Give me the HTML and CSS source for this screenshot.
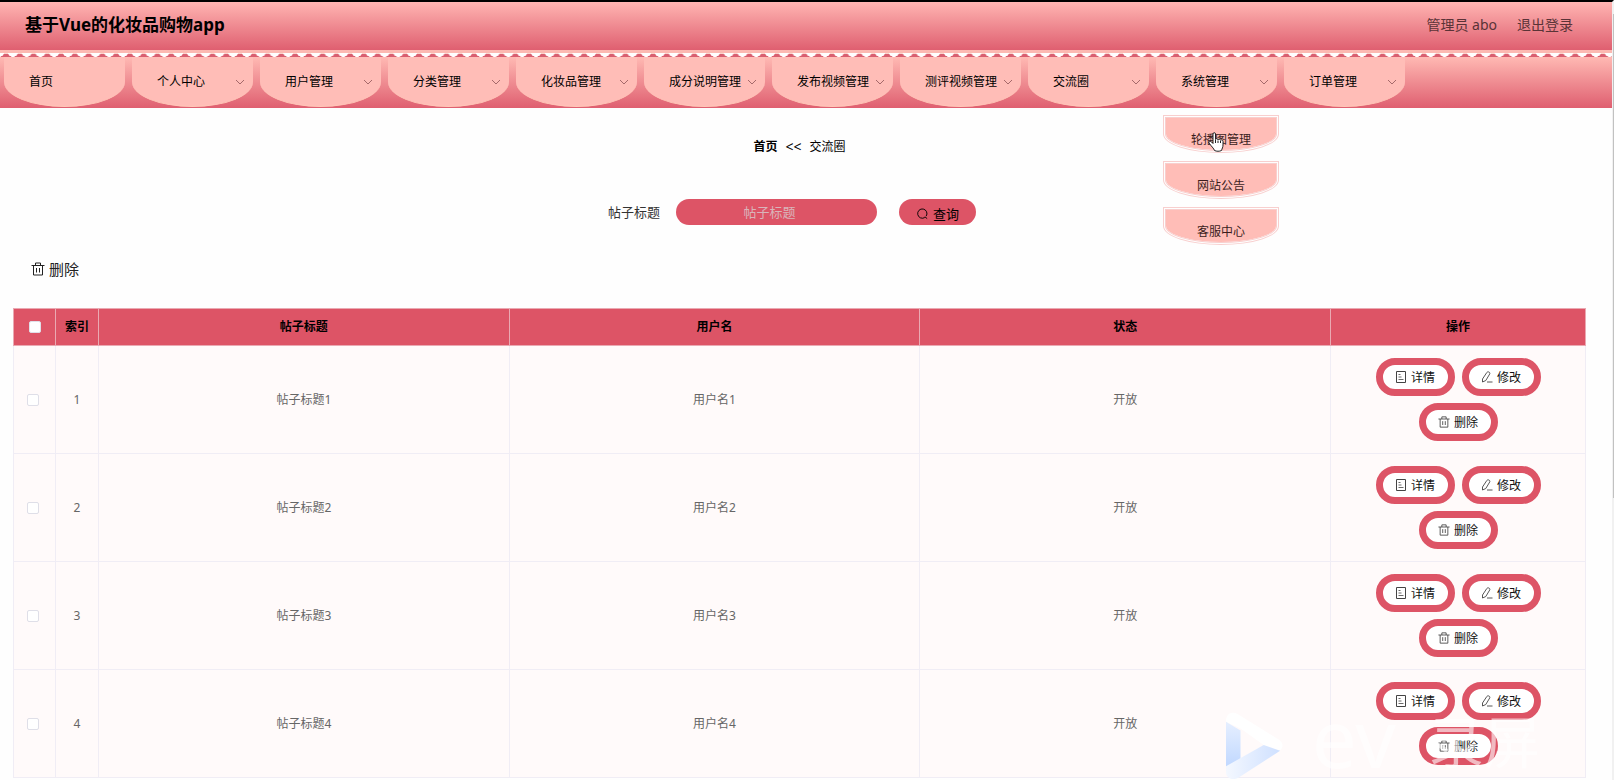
FILE: index.html
```html
<!DOCTYPE html>
<html lang="zh-CN">
<head>
  <meta charset="UTF-8">
  <meta name="viewport" content="width=device-width, initial-scale=1">
  <title>基于Vue的化妆品购物app</title>
  <link rel="stylesheet" href="styles.css">
</head>
<body>
  <svg width="0" height="0" class="sprite" aria-hidden="true">
    <symbol id="icon-arrow" viewBox="0 0 10 10">
      <path d="M1 3l4 4 4-4"/>
    </symbol>
    <symbol id="icon-search" viewBox="0 0 14 14">
      <path d="M9.500 11.300A5 5 0 1 1 11 9.800M9.500 10.500l2.500 2"/>
    </symbol>
    <symbol id="icon-delete" viewBox="0 0 14 14">
      <path d="M.5 3.500h13M2.500 3.500v9.500h9V3.500M4.500 3.500V1h5v2.500M5.500 6v4.500M8.500 6v4.500"/>
    </symbol>
    <symbol id="icon-detail" viewBox="0 0 12 12">
      <path d="M1.500.5h9v11h-9z"/>
      <path stroke-width=".8" d="M3.500 3.500h2M3.500 6h3M3.500 8.500h5"/>
    </symbol>
    <symbol id="icon-edit" viewBox="0 0 12 12">
      <path stroke-width=".9" d="M1.500 8l4.300-6.500c1-1.500 3.800-.2 2.900 1.500L4.800 9.500l-3.300 1.500zM6 11h5.500"/>
    </symbol>
  </svg>

  <header class="top">
    <h1>基于Vue的化妆品购物app</h1>
    <div class="user">
      <span>管理员 abo</span>
      <a href="#">退出登录</a>
    </div>
  </header>
  <div class="lace"></div>

  <nav class="menu">
    <a class="item" href="#">首页</a>
    <a class="item" href="#">个人中心<svg><use href="#icon-arrow"/></svg></a>
    <a class="item" href="#">用户管理<svg><use href="#icon-arrow"/></svg></a>
    <a class="item" href="#">分类管理<svg><use href="#icon-arrow"/></svg></a>
    <a class="item" href="#">化妆品管理<svg><use href="#icon-arrow"/></svg></a>
    <a class="item" href="#">成分说明管理<svg><use href="#icon-arrow"/></svg></a>
    <a class="item" href="#">发布视频管理<svg><use href="#icon-arrow"/></svg></a>
    <a class="item" href="#">测评视频管理<svg><use href="#icon-arrow"/></svg></a>
    <a class="item" href="#">交流圈<svg><use href="#icon-arrow"/></svg></a>
    <div class="group">
      <a class="item" href="#">系统管理<svg><use href="#icon-arrow"/></svg></a>
      <div class="submenu">
        <a href="#">轮播图管理</a>
        <a href="#">网站公告</a>
        <a href="#">客服中心</a>
        <svg class="cursor" viewBox="0 0 16 20">
          <path d="M5 2c0-1.800 2.500-1.800 2.500 0v5.500c.2-1.200 2.400-1.100 2.500.3.400-1 2.400-.8 2.500.5.500-.8 2.500-.6 2.500 1V13c0 2.500-1 3.500-1.500 5.500-2 1-5 1-7 0C6 16.500 3 14 1 11c-.8-1.500 1-2.500 2.200-1.300L5 11.500z"/>
          <path d="M7.500 8v3M10 8.500V11M12.500 9v2"/>
        </svg>
      </div>
    </div>
    <a class="item" href="#">订单管理<svg><use href="#icon-arrow"/></svg></a>
  </nav>

  <main>
    <div class="crumbs"><a href="#">首页</a><span class="sep">&lt;&lt;</span><span>交流圈</span></div>

    <form class="search">
      <label for="title">帖子标题</label>
      <input type="text" id="title" placeholder="帖子标题">
      <button type="button"><svg><use href="#icon-search"/></svg>查询</button>
    </form>

    <button type="button" class="batch"><svg><use href="#icon-delete"/></svg>删除</button>

    <table>
      <colgroup>
        <col class="col-check">
        <col class="col-index">
        <col>
        <col>
        <col>
        <col class="col-ops">
      </colgroup>
      <thead>
        <tr>
          <th><input type="checkbox" aria-label="全选"></th>
          <th>索引</th>
          <th>帖子标题</th>
          <th>用户名</th>
          <th>状态</th>
          <th>操作</th>
        </tr>
      </thead>
      <tbody id="rows"></tbody>
    </table>
  </main>

  <div class="watermark" aria-hidden="true">
    <svg viewBox="0 0 60 72">
      <defs>
        <linearGradient id="wm-side" x1="0" y1="0" x2="0" y2="1">
          <stop offset="0" stop-color="#e6efff"/>
          <stop offset="1" stop-color="#bcd5ff"/>
        </linearGradient>
        <linearGradient id="wm-base" x1="0" y1="0" x2="1" y2="0">
          <stop offset="0" stop-color="#f4f8ff"/>
          <stop offset="1" stop-color="#cfe0ff"/>
        </linearGradient>
      </defs>
      <path fill="#fff" d="M0 12C0 3 6 1 12 4l42 26c6 4 6 9 0 13l-15-7-24-17z"/>
      <path fill="url(#wm-side)" d="M0 12l15 9v33L0 64z"/>
      <path fill="url(#wm-base)" d="M0 58l39-22 17 6-42 27C6 74 0 70 0 64z"/>
    </svg>
    <span class="wm-ev">ev</span><span class="wm-name">录屏</span>
  </div>

  <script>
    const rows = document.getElementById('rows');
    const ops = [['detail', '详情'], ['edit', '修改'], ['delete', '删除']];

    for (let i = 1; i <= 4; i++) {
      const buttons = ops.map(([icon, text]) =>
        `<button type="button"><svg><use href="#icon-${icon}"/></svg>${text}</button>`).join('');
      rows.innerHTML += `<tr>
        <td><input type="checkbox" aria-label="选择${i}"></td>
        <td>${i}</td>
        <td>帖子标题${i}</td>
        <td>用户名${i}</td>
        <td>开放</td>
        <td><div class="ops">${buttons}</div></td>
      </tr>`;
    }
  </script>
</body>
</html>
```
FILE: styles.css
```css
* {
  box-sizing: border-box;
}

body {
  min-height: 100vh;
  margin: 0;
  border-top: 2px solid #000;
  border-right: 2px solid #f1f1f1;
  font-family: "Noto Sans", "Noto Sans CJK SC", sans-serif;
  font-size: 12px;
  line-height: 20px;
  color: #000;
  background: #fefefe;
}

/* scrollbar thumb */
body::after {
  content: "";
  position: fixed;
  top: 14px;
  right: 0;
  width: 1px;
  height: 62%;
  background: #c1c1c1;
}

a {
  color: inherit;
  text-decoration: none;
}

button {
  font-family: inherit;
  cursor: pointer;
}

svg {
  fill: none;
  stroke: currentColor;
  flex-shrink: 0;
}

.sprite {
  position: absolute;
}

.top {
  display: flex;
  align-items: center;
  justify-content: space-between;
  height: 48px;
  padding: 0 39px 2px 25px;
  background: linear-gradient(#ffb5b2, #df5f70);
}

.top h1 {
  margin: 0;
  font-size: 17px;
}

.user {
  display: flex;
  gap: 20px;
  font-size: 14px;
  color: #5a3337;
}

.lace {
  height: 7px;
  background:
    radial-gradient(ellipse 5px 4px at 50% 0, #fff 90%, transparent) 6px 3px / calc(100% / 117) 4px repeat-x,
    linear-gradient(#fcb9b2 3px, #fbd3cd 3px, #fbd3cd 4px, #d95f70 4px);
}

.menu {
  display: flex;
  gap: 7px;
  height: 51px;
  padding: 0 4px;
  background: linear-gradient(#ffb9b3, #df5f70);
}

.item {
  display: flex;
  align-items: center;
  justify-content: space-between;
  width: 121px;
  height: 50px;
  padding: 0 8px 0 25px;
  white-space: nowrap;
  border-bottom: 1px solid #ffc8b8;
  border-radius: 0 0 50% 50%;
  background: #ffbdb7;
}

.item svg {
  width: 10px;
  height: 10px;
  color: #a5696a;
}

.group {
  position: relative;
}

.submenu {
  position: absolute;
  top: 58px;
  left: 7px;
  display: flex;
  flex-direction: column;
  gap: 8px;
}

.submenu a {
  width: 116px;
  height: 38px;
  padding-top: 12px;
  text-align: center;
  color: #3b1d1d;
  border: 3px double #f8cfce;
  border-radius: 0 0 50% 50%;
  background: #ffbdb7;
  background-clip: padding-box;
}

.cursor {
  position: absolute;
  top: 17px;
  left: 45px;
  width: 16px;
  height: 20px;
  fill: #fff;
  stroke: #222;
}

.crumbs {
  display: flex;
  justify-content: center;
  gap: 8px;
  padding: 29px 13px 0 0;
}

.crumbs a {
  font-weight: bold;
}

.crumbs .sep {
  font-size: 14px;
}

.search {
  display: flex;
  align-items: center;
  justify-content: center;
  padding: 42px 28px 0 0;
  font-size: 13px;
}

.search label {
  margin-right: 16px;
  color: #333;
}

.search input {
  width: 201px;
  height: 26px;
  margin-right: 22px;
  padding: 0 14px 0 0;
  border: 0;
  border-radius: 13px;
  font: inherit;
  text-align: center;
  background: #dd5466;
}

.search input::placeholder {
  color: #d9b4ba;
}

.search button {
  display: flex;
  align-items: center;
  justify-content: center;
  gap: 4px;
  width: 77px;
  height: 26px;
  padding: 3px 0 0;
  border: 0;
  border-radius: 13px;
  font-size: 13px;
  background: #dd5466;
}

.search svg {
  width: 13px;
  height: 13px;
}

.batch {
  display: flex;
  align-items: center;
  gap: 4px;
  margin: 32px 0 27px 31px;
  padding: 0;
  border: 0;
  font-size: 15px;
  line-height: 24px;
  color: #222;
  background: none;
}

.batch svg {
  width: 14px;
  height: 14px;
}

table {
  width: calc(100% - 39px);
  margin-left: 13px;
  table-layout: fixed;
  border-collapse: collapse;
}

.col-check {
  width: 42px;
}

.col-index {
  width: 43px;
}

.col-ops {
  width: 255px;
}

th,
td {
  padding: 0;
  text-align: center;
  border: 1px solid #f0edf5;
}

th {
  height: 37px;
  border-color: #eaa9b2;
  background: #dd5466;
}

td {
  height: 108px;
  color: #666;
  background: #fffafa;
}

td:first-child {
  padding-right: 3px;
}

input[type="checkbox"] {
  appearance: none;
  display: block;
  width: 12px;
  height: 12px;
  margin: 0 auto;
  border: 1px solid #dfdfe8;
  border-radius: 2px;
  background: #fff;
}

.ops {
  display: flex;
  flex-wrap: wrap;
  justify-content: center;
  gap: 7px;
  padding: 0 40px;
}

.ops button {
  display: flex;
  align-items: center;
  justify-content: center;
  gap: 4px;
  width: 79px;
  height: 38px;
  padding: 0;
  border: 7px solid #dd5466;
  border-radius: 19px;
  font-size: 12px;
  color: #111;
  background: #fff;
}

.ops svg {
  width: 12px;
  height: 12px;
  color: #444;
}

/* screen recorder mark over the page */
.watermark {
  position: fixed;
  right: 74px;
  bottom: 0;
  display: flex;
  align-items: center;
  height: 70px;
  color: rgba(255, 255, 255, 0.6);
  line-height: 56px;
  pointer-events: none;
}

.watermark svg {
  width: 58px;
  height: 70px;
  margin-right: 28px;
  stroke: none;
}

.wm-ev {
  margin-right: 32px;
  padding-bottom: 16px;
  font-size: 80px;
}

.wm-name {
  padding-bottom: 8px;
  font-size: 56px;
}
```
